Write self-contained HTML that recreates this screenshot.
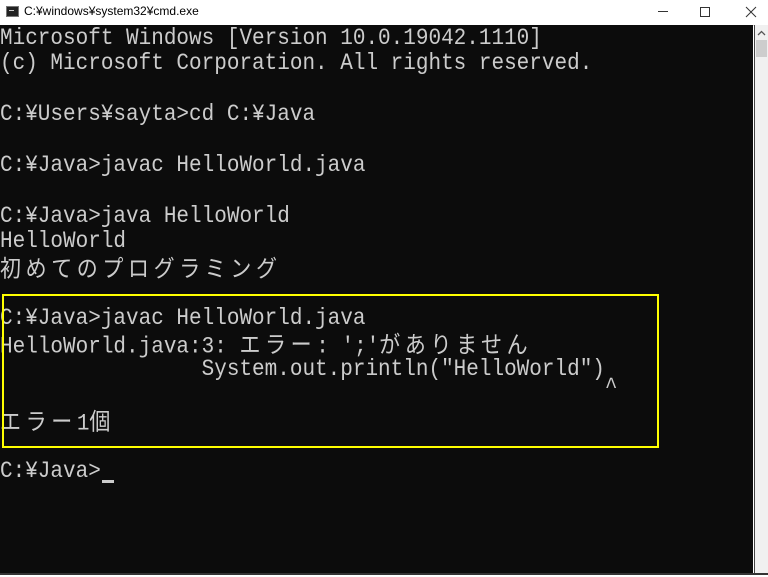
<!DOCTYPE html>
<html><head><meta charset="utf-8"><style>
html,body{margin:0;padding:0;width:768px;height:575px;overflow:hidden;background:#fff}
.title{position:absolute;left:0;top:0;width:768px;height:25px;background:#fff;border-bottom:1px solid #ddd}
.title .t{position:absolute;left:24px;top:4px;font:12px "Liberation Sans","Noto Sans CJK JP",sans-serif;color:#000}
.ico{position:absolute;left:6px;top:6px;width:13px;height:11px;background:#222;border:1px solid #777;box-sizing:border-box}
.ico:after{content:"";position:absolute;left:2px;top:3px;width:5px;height:1px;background:#ccc}
.con{position:absolute;left:0;top:25px;width:753px;height:549px;background:#0c0c0c}
.sb{position:absolute;left:754px;top:25px;width:14px;height:549px;background:#f0f0f0;border-left:1px solid #444;box-sizing:border-box}
.thumb{position:absolute;left:756px;top:40px;width:11px;height:17px;background:#cdcdcd}
.bot{position:absolute;left:0;top:573px;width:768px;height:2px;background:#333}
.ls{position:absolute;left:0;top:2px;width:768px;height:575px}
.l{position:absolute;left:0;font:21px/25.4px "Liberation Mono",monospace;color:#cccccc;white-space:pre;transform:scaleY(1.12);transform-origin:top left}
.j{font-family:"Noto Sans CJK JP",sans-serif;letter-spacing:4.6px}
.box{position:absolute;left:2px;top:294px;width:653px;height:150px;border:2px solid #ffff00}
.cur{position:absolute;left:102px;top:480px;width:12px;height:3px;background:#ccc}
</style></head><body>
<div class="title"><div class="ico"></div><div class="t">C:¥windows¥system32¥cmd.exe</div>
<svg style="position:absolute;left:640px;top:0" width="128" height="25"><line x1="18" y1="11.5" x2="28" y2="11.5" stroke="#333"/><rect x="60.5" y="7.5" width="9" height="9" fill="none" stroke="#333"/><path d="M106 7 L116 17 M116 7 L106 17" stroke="#333"/></svg></div>
<div class="con"></div>
<div class="sb"></div><div class="thumb"></div>
<svg style="position:absolute;left:756px;top:29px" width="11" height="8"><path d="M2 6 L5.5 2.5 L9 6" stroke="#555" fill="none" stroke-width="1.3"/></svg>
<div class="bot"></div>
<div class="ls">
<div class="l" style="top:23px">Microsoft Windows [Version 10.0.19042.1110]</div>
<div class="l" style="top:48px">(c) Microsoft Corporation. All rights reserved.</div>
<div class="l" style="top:99px">C:¥Users¥sayta&gt;cd C:¥Java</div>
<div class="l" style="top:150px">C:¥Java&gt;javac HelloWorld.java</div>
<div class="l" style="top:201px">C:¥Java&gt;java HelloWorld</div>
<div class="l" style="top:226px">HelloWorld</div>
<div class="l" style="top:252px"><span class="j">初めてのプログラミング</span></div>
<div class="l" style="top:303px">C:¥Java&gt;javac HelloWorld.java</div>
<div class="l" style="top:328px">HelloWorld.java:3: <span class="j">エラー</span>: ';'<span class="j">がありません</span></div>
<div class="l" style="top:354px">                System.out.println("HelloWorld")</div>
<div class="l" style="top:372px">                                                ^</div>
<div class="l" style="top:405px"><span class="j">エラー</span>1<span class="j">個</span></div>
<div class="l" style="top:456px">C:¥Java&gt;</div>
</div>
<div class="cur"></div>
<div class="box"></div>
</body></html>
